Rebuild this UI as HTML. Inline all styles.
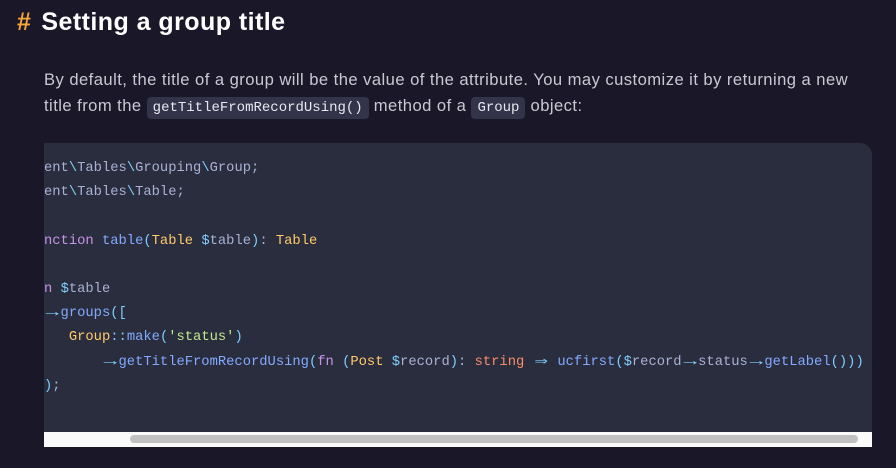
<!DOCTYPE html>
<html><head><style>
html,body{margin:0;padding:0;background:#1a1828;width:896px;height:468px;overflow:hidden}
body{font-family:"Liberation Sans",sans-serif;position:relative}
.h{position:absolute;left:17px;top:8px;font-size:25px;letter-spacing:0.45px;font-weight:bold;color:#fff;white-space:nowrap}
.h span{color:#f6a53b;margin-right:10px}
.p{position:absolute;left:44px;font-size:16.6px;letter-spacing:0.45px;color:#c9c8d2;white-space:nowrap}
code{font-family:"Liberation Mono",monospace;font-size:14px;letter-spacing:0;background:#33334a;color:#e8e8f0;border-radius:4px;padding:3px 6px}
.box{position:absolute;left:44px;top:143px;width:828px;height:304px;background:#2a2d3d;border-radius:0 12px 0 0;overflow:hidden}
pre{margin:0;position:absolute;left:0;top:14px;font-family:"Liberation Mono",monospace;font-size:13.8px;line-height:24.2px;color:#a9b1d6}
.a{display:inline-block;width:2ch;text-align:center;transform:scaleX(1.6)}
.sb{position:absolute;left:0;top:289px;width:828px;height:15px;background:#fafafa}
.th{position:absolute;left:86px;top:3px;width:728px;height:8px;border-radius:4px;background:#c1c1c1}
.c{color:#7dcfff}.k{color:#c792ea}.f{color:#82aaff}.y{color:#ffcb6b}.s{color:#c3e88d}.o{color:#f78c6c}
</style></head><body>
<div class="h"><span>#</span>Setting a group title</div>
<div class="p" style="top:70px">By default, the title of a group will be the value of the attribute. You may customize it by returning a new</div>
<div class="p" style="top:96px">title from the <code>getTitleFromRecordUsing()</code> method of a <code>Group</code> object:</div>
<div class="box">
<pre>ent<span class="c">\</span>Tables<span class="c">\</span>Grouping<span class="c">\</span>Group;
ent<span class="c">\</span>Tables<span class="c">\</span>Table;

<span class="k">nction</span> <span class="f">table</span><span class="c">(</span><span class="y">Table</span> <span class="c">$</span>table<span class="c">)</span>: <span class="y">Table</span>

<span class="k">n</span> <span class="c">$</span>table
<span class="c a">→</span><span class="f">groups</span><span class="c">([</span>
   <span class="y">Group</span><span class="c">::</span><span class="f">make</span><span class="c">(</span><span class="s">'status'</span><span class="c">)</span>
       <span class="c a">→</span><span class="f">getTitleFromRecordUsing</span><span class="c">(</span><span class="k">fn</span> <span class="c">(</span><span class="y">Post</span> <span class="c">$</span>record<span class="c">)</span>: <span class="o">string</span> <span class="c a">⇒</span> <span class="f">ucfirst</span><span class="c">($</span>record<span class="c a">→</span>status<span class="c a">→</span><span class="f">getLabel</span><span class="c">()))</span>
<span class="c">)</span>;</pre>
<div class="sb"><div class="th"></div></div>
</div>
</body></html>
